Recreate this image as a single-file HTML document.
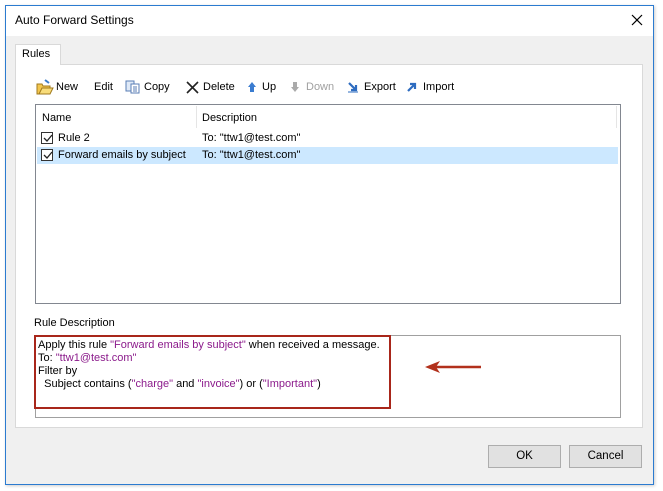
<!DOCTYPE html>
<html><head><style>
*{margin:0;padding:0;box-sizing:border-box}
body{width:663px;height:491px;background:#fff;font-family:"Liberation Sans",sans-serif;font-size:11px;color:#000;position:relative;overflow:hidden}
.a{position:absolute}
.win{left:5px;top:5px;width:649px;height:480px;border:1px solid #2b7bd0;background:#f0f0f0;box-shadow:1px 1px 3px rgba(0,0,0,.2)}
.t{white-space:nowrap}
.p{color:#8b1a8b}
.btn{border:1px solid #adadad;background:#e1e1e1;text-align:center;line-height:20px;height:23px;width:73px;font-size:11.5px}
.cb{width:12px;height:12px;border:1px solid #333;background:#fff}
</style></head><body>
<div class="a win"></div>
<div class="a" style="left:6px;top:6px;width:647px;height:30px;background:#fff"></div>
<div class="a t" style="left:15px;top:13px;font-size:12px">Auto Forward Settings</div>
<svg class="a" style="left:631px;top:14px" width="12" height="12"><path d="M1 1L11 11M11 1L1 11" stroke="#000" stroke-width="1.2"/></svg>
<div class="a" style="left:15px;top:64px;width:628px;height:364px;background:#fff;border:1px solid #d9d9d9"></div>
<div class="a" style="left:15px;top:44px;width:46px;height:21px;background:#fff;border:1px solid #d9d9d9;border-bottom:none"></div>
<div class="a t" style="left:22px;top:48px">Rules</div>
<svg class="a" style="left:36px;top:79px" width="18" height="16"><path d="M1 5h5l1 2h7v8H1z" fill="#f3c64d" stroke="#a07a1e"/><path d="M3 15l3-6h11l-3 6z" fill="#f8dc7a" stroke="#a07a1e"/><path d="M9 1l4 3" stroke="#3a7cc9" stroke-width="2"/></svg>
<div class="a t" style="left:56px;top:81px">New</div>
<div class="a t" style="left:94px;top:81px">Edit</div>
<svg class="a" style="left:125px;top:80px" width="16" height="14"><rect x="1" y="1" width="8" height="10" fill="#dfe9f7" stroke="#5a7eb5"/><rect x="6" y="4" width="8" height="9" fill="#fff" stroke="#5a7eb5"/><path d="M8 7h4M8 9h4M8 11h4" stroke="#5a7eb5"/></svg>
<div class="a t" style="left:144px;top:81px">Copy</div>
<svg class="a" style="left:186px;top:81px" width="13" height="13"><path d="M1 1L12 12M12 1L1 12" stroke="#222" stroke-width="1.6"/></svg>
<div class="a t" style="left:203px;top:81px">Delete</div>
<svg class="a" style="left:247px;top:81px" width="10" height="12"><path d="M5 1L9 6H7v5H3V6H1z" fill="#3a7cd0"/></svg>
<div class="a t" style="left:262px;top:81px">Up</div>
<svg class="a" style="left:290px;top:81px" width="10" height="12"><path d="M5 11L9 6H7V1H3v5H1z" fill="#aaa"/></svg>
<div class="a t" style="left:306px;top:81px;color:#a0a0a0">Down</div>
<svg class="a" style="left:347px;top:81px" width="12" height="12"><path d="M2 2l7 7M9 4v5H4" stroke="#2e6cc0" stroke-width="2.2" fill="none"/><path d="M1 11h10" stroke="#2e6cc0"/></svg>
<div class="a t" style="left:364px;top:81px">Export</div>
<svg class="a" style="left:406px;top:81px" width="12" height="12"><path d="M2 10l7-7M4 3h5v5" stroke="#2e6cc0" stroke-width="2.2" fill="none"/></svg>
<div class="a t" style="left:423px;top:81px">Import</div>
<div class="a" style="left:35px;top:104px;width:586px;height:200px;border:1px solid #828790;background:#fff"></div>
<div class="a" style="left:196px;top:106px;width:1px;height:22px;background:#e5e5e5"></div>
<div class="a" style="left:616px;top:106px;width:1px;height:22px;background:#e5e5e5"></div>
<div class="a t" style="left:42px;top:112px">Name</div>
<div class="a t" style="left:202px;top:112px">Description</div>
<div class="a cb" style="left:41px;top:132px"></div>
<svg class="a" style="left:42px;top:133px" width="11" height="11"><path d="M2 5l3 3 5-6" stroke="#222" stroke-width="1.3" fill="none"/></svg>
<div class="a t" style="left:58px;top:132px">Rule 2</div>
<div class="a t" style="left:202px;top:132px">To: "ttw1@test.com"</div>
<div class="a" style="left:37px;top:147px;width:581px;height:17px;background:#cce8ff"></div>
<div class="a cb" style="left:41px;top:149px"></div>
<svg class="a" style="left:42px;top:150px" width="11" height="11"><path d="M2 5l3 3 5-6" stroke="#222" stroke-width="1.3" fill="none"/></svg>
<div class="a t" style="left:58px;top:149px">Forward emails by subject</div>
<div class="a t" style="left:202px;top:149px">To: "ttw1@test.com"</div>
<div class="a t" style="left:34px;top:317px">Rule Description</div>
<div class="a" style="left:35px;top:335px;width:586px;height:83px;border:1px solid #a0a0a0;background:#fff"></div>
<div class="a" style="left:34px;top:335px;width:357px;height:74px;border:2px solid #a8261a"></div>
<div class="a t" style="left:38px;top:339px;line-height:13px">Apply this rule <span class="p">"Forward emails by subject"</span> when received a message.<br>To: <span class="p">"ttw1@test.com"</span><br>Filter by<br>&nbsp;&nbsp;Subject contains (<span class="p">"charge"</span> and <span class="p">"invoice"</span>) or (<span class="p">"Important"</span>)</div>
<svg class="a" style="left:424px;top:359px" width="58" height="16"><path d="M6 8H57" stroke="#b2311c" stroke-width="2.5"/><path d="M1 8L16 2L12 8L16 14z" fill="#b2311c"/></svg>
<div class="a btn" style="left:488px;top:445px">OK</div>
<div class="a btn" style="left:569px;top:445px">Cancel</div>
</body></html>
